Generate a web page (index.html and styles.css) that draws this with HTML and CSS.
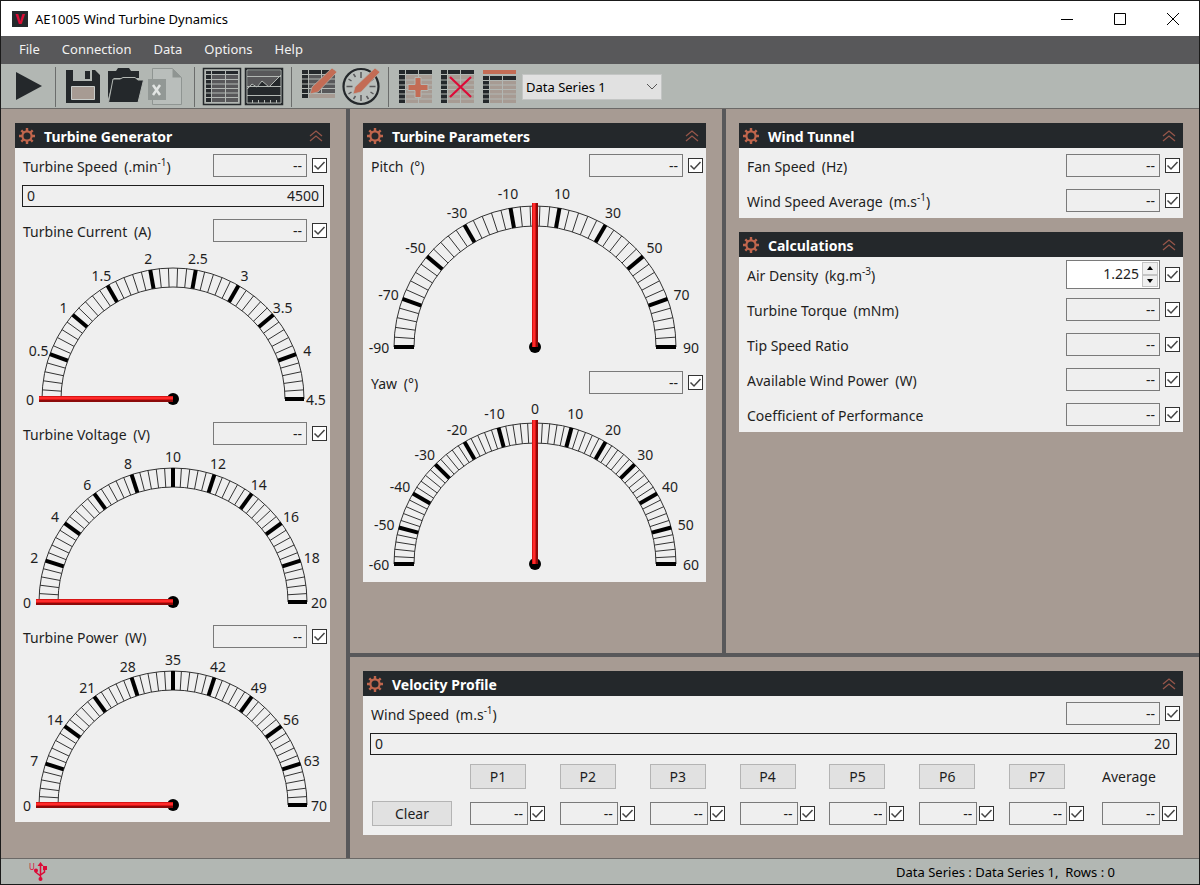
FILE: index.html
```html
<!DOCTYPE html>
<html lang="en">
<head>
  <meta charset="UTF-8" />
  <title>AE1005 Wind Turbine Dynamics</title>
  <link rel="stylesheet" href="styles.css">
</head>
<body>

  <!-- shared icons -->
  <svg class="sprite" aria-hidden="true">
    <symbol id="gear" viewBox="0 0 16 16">
      <circle cx="8" cy="8" r="4.6" fill="none" stroke="currentColor" stroke-width="2.2"/>
      <path d="M8 0v3M8 13v3M0 8h3M13 8h3M2.3 2.3l2.2 2.2M11.5 11.5l2.2 2.2M2.3 13.7l2.2-2.2M11.5 4.5l2.2-2.2" stroke="currentColor" stroke-width="2.4"/>
    </symbol>
    <symbol id="chevrons" viewBox="0 0 14 12">
      <path d="M1 6l6-5 6 5M1 11l6-5 6 5" fill="none" stroke="currentColor" stroke-width="1.3"/>
    </symbol>
  </svg>

  <header class="titlebar">
    <span class="logo">V</span>
    <h1>AE1005 Wind Turbine Dynamics</h1>
    <div class="window-buttons">
      <button aria-label="Minimize"><svg width="14" height="14"><path d="M1 7.5h12"/></svg></button>
      <button aria-label="Maximize"><svg width="14" height="14"><path d="M1.5 1.5h11v11h-11z"/></svg></button>
      <button aria-label="Close"><svg width="14" height="14"><path d="M1 1l12 12M13 1L1 13"/></svg></button>
    </div>
  </header>

  <nav class="menubar">
    <a href="#">File</a>
    <a href="#">Connection</a>
    <a href="#">Data</a>
    <a href="#">Options</a>
    <a href="#">Help</a>
  </nav>

  <div class="toolbar">
    <button aria-label="Run">
      <svg viewBox="0 0 42 42"><path d="M9 6l26 14L9 34z" fill="#24282b"/></svg>
    </button>
    <span class="sep"></span>
    <button aria-label="Save">
      <svg viewBox="0 0 42 42">
        <path d="M4 4h7v11h19V4h3l5 5v28H4z" fill="#24282b"/>
        <path d="M23 5h5v8h-5z" fill="#24282b"/>
        <path d="M9.5 20.5h23v13h-23z" fill="#a79b93" stroke="#c9cdca"/>
      </svg>
    </button>
    <button aria-label="Open">
      <svg viewBox="0 0 42 42">
        <path d="M4 33V5h8l2-3h11l2 3h8v7H10z" fill="#24282b"/>
        <path d="M4.5 36.5L9 13h7l3-1.500h12l3 2.5h5.5L34 36.5z" fill="#24282b" stroke="#b2b7b3"/>
      </svg>
    </button>
    <button aria-label="Export to Excel">
      <svg viewBox="0 0 42 42">
        <path d="M6.5 2.5h20l9 9v27h-29z" fill="#b9bebb" stroke="#8f9592"/>
        <path d="M26.5 2.5l9 9h-9z" fill="#8f9592"/>
        <path d="M2 13h18v21H2z" fill="#929895"/>
        <path d="M7 19l7 10M14 19L7 29" stroke="#e2e5e3" stroke-width="2.5"/>
      </svg>
    </button>
    <span class="sep"></span>
    <button aria-label="Data table">
      <svg viewBox="0 0 42 42">
        <path d="M2.5 2.5h37v36h-37z" fill="#b2b7b3" stroke="#24282b" stroke-width="1.5"/>
        <path d="M5 5h5v31H5zM11 5h13v3H11zM25 5h12v3H25z" fill="#24282b"/>
        <path d="M11 9h13v27H11zM25 9h12v27H25z" fill="#58585a"/>
        <path d="M5 8.5h33M5 13.5h33M5 18h33M5 22.5h33M5 27h33M5 31.500h33" stroke="#b2b7b3" stroke-width="1.2"/>
      </svg>
    </button>
    <button aria-label="Chart">
      <svg viewBox="0 0 42 42">
        <path d="M2.5 2.5h37v36h-37z" fill="#24282b" stroke="#24282b" stroke-width="1.5"/>
        <path d="M4 4h34v33H4z" fill="#24282b" stroke="#b2b7b3"/>
        <path d="M5 5h32v5L26 21l-7-6-5 5-4-2-5 5z" fill="#58585a"/>
        <path d="M4 10.5h34M4 20.5h34M4 29.5h34" stroke="#b2b7b3"/>
        <path d="M4 23l5-5 5 3 5-6 7 6 12-12" fill="none" stroke="#b2b7b3"/>
        <path d="M9.5 34v3M15.5 34v3M21.5 34v3M27.5 34v3M33.5 34v3" stroke="#b2b7b3"/>
      </svg>
    </button>
    <span class="sep"></span>
    <button aria-label="Edit data">
      <svg viewBox="0 0 42 42">
        <path d="M4 4h6v28H4zM11 4h12v4H11zM24 4h13v4H24z" fill="#24282b"/>
        <path d="M11 9h12v18H11zM24 9h13v18H24z" fill="#58585a"/>
        <path d="M11 28h26v4H11z" fill="#a79b93"/>
        <path d="M4 8.5h33M4 13h33M4 18h33M4 22.5h33M4 27.5h33" stroke="#b2b7b3"/>
        <path d="M12 28l2-7L34 2l5 4-19 20z" fill="#c36c55" stroke="#b2b7b3" stroke-width=".7"/>
      </svg>
    </button>
    <button aria-label="Timed capture">
      <svg viewBox="0 0 42 42">
        <circle cx="21" cy="20.5" r="17.5" fill="#b9bebb" stroke="#24282b" stroke-width="2.2"/>
        <path d="M21 6v6M21 29v6M6.5 20.5h6M29.5 20.5h6M13.5 8l2 3M28.5 33l-2-3M8.5 13l3 2M33.5 28l-3-2M8.5 28l3-2M13.5 33l2-3M33.5 13l-3 2" stroke="#58585a" stroke-width="1.5"/>
        <path d="M13 28l2-7L35 2l5 4-19 20z" fill="#c36c55" stroke="#b2b7b3" stroke-width=".7"/>
      </svg>
    </button>
    <span class="sep"></span>
    <button aria-label="Add series">
      <svg viewBox="0 0 42 42">
        <path d="M4 4h6v33H4zM11 4h12v4H11zM24 4h13v4H24z" fill="#24282b"/>
        <path d="M11 9h12v28H11zM24 9h13v28H24z" fill="#a79b93"/>
        <path d="M4 8.5h33M4 14h33M4 19h33M4 23.5h33M4 28h33M4 33h33" stroke="#b2b7b3"/>
        <path d="M20 11.5h6v7h7v6h-7v7h-6v-7h-7v-6h7z" fill="#c36c55" stroke="#b2b7b3"/>
      </svg>
    </button>
    <button aria-label="Delete series">
      <svg viewBox="0 0 42 42">
        <path d="M4 4h6v33H4zM11 4h12v4H11zM24 4h13v4H24z" fill="#24282b"/>
        <path d="M11 9h12v28H11zM24 9h13v28H24z" fill="#a79b93"/>
        <path d="M4 8.5h33M4 14h33M4 19h33M4 23.5h33M4 28h33M4 33h33" stroke="#b2b7b3"/>
        <path d="M13 11l21 20M34 11L13 31" stroke="#dc0a37" stroke-width="2.2"/>
      </svg>
    </button>
    <button aria-label="Rename series">
      <svg viewBox="0 0 42 42">
        <path d="M4 4h33v4H4z" fill="#c36c55"/>
        <path d="M4 10h6v27H4zM11 10h12v4H11zM24 10h13v4H24z" fill="#24282b"/>
        <path d="M11 15h12v22H11zM24 15h13v22H24z" fill="#a79b93"/>
        <path d="M4 14.5h33M4 19h33M4 23.5h33M4 28h33M4 33h33" stroke="#b2b7b3"/>
      </svg>
    </button>
    <select aria-label="Data series">
      <option>Data Series 1</option>
    </select>
  </div>

  <main class="workspace">
    <section class="pane generator">
      <article class="panel">
        <h2><svg class="gear"><use href="#gear"/></svg>Turbine Generator<button aria-label="Collapse"><svg><use href="#chevrons"/></svg></button></h2>
        <div class="row">
          <label for="speed">Turbine Speed <span>(.min<sup>-1</sup>)</span></label>
          <input id="speed" class="value" value="--" readonly>
          <input type="checkbox" aria-label="Record turbine speed" checked>
        </div>
        <div class="bar"><span>0</span><span>4500</span></div>
        <div class="row">
          <label for="current">Turbine Current <span>(A)</span></label>
          <input id="current" class="value" value="--" readonly>
          <input type="checkbox" aria-label="Record turbine current" checked>
        </div>
        <svg class="gauge" viewBox="0 0 315 168" data-min="0" data-max="4.5" data-step="0.5" data-value="0" data-radius="131" data-gap="12"></svg>
        <div class="row">
          <label for="voltage">Turbine Voltage <span>(V)</span></label>
          <input id="voltage" class="value" value="--" readonly>
          <input type="checkbox" aria-label="Record turbine voltage" checked>
        </div>
        <svg class="gauge" viewBox="0 0 315 168" data-min="0" data-max="20" data-step="2" data-value="0" data-radius="134" data-gap="12"></svg>
        <div class="row">
          <label for="power">Turbine Power <span>(W)</span></label>
          <input id="power" class="value" value="--" readonly>
          <input type="checkbox" aria-label="Record turbine power" checked>
        </div>
        <svg class="gauge" viewBox="0 0 315 168" data-min="0" data-max="70" data-step="7" data-value="0" data-radius="134" data-gap="12"></svg>
      </article>
    </section>

    <section class="pane parameters">
      <article class="panel">
        <h2><svg class="gear"><use href="#gear"/></svg>Turbine Parameters<button aria-label="Collapse"><svg><use href="#chevrons"/></svg></button></h2>
        <div class="row">
          <label for="pitch">Pitch <span>(°)</span></label>
          <input id="pitch" class="value" value="--" readonly>
          <input type="checkbox" aria-label="Record pitch" checked>
        </div>
        <svg class="gauge" viewBox="0 0 343 182" data-min="-90" data-max="90" data-step="20" data-value="0" data-radius="141" data-gap="15"></svg>
        <div class="row">
          <label for="yaw">Yaw <span>(°)</span></label>
          <input id="yaw" class="value" value="--" readonly>
          <input type="checkbox" aria-label="Record yaw" checked>
        </div>
        <svg class="gauge" viewBox="0 0 343 182" data-min="-60" data-max="60" data-step="10" data-value="0" data-radius="141" data-gap="15"></svg>
      </article>
    </section>

    <section class="pane tunnel">
      <article class="panel">
        <h2><svg class="gear"><use href="#gear"/></svg>Wind Tunnel<button aria-label="Collapse"><svg><use href="#chevrons"/></svg></button></h2>
        <div class="row">
          <label for="fan">Fan Speed <span>(Hz)</span></label>
          <input id="fan" class="value" value="--" readonly>
          <input type="checkbox" aria-label="Record fan speed" checked>
        </div>
        <div class="row">
          <label for="wind-average">Wind Speed Average <span>(m.s<sup>-1</sup>)</span></label>
          <input id="wind-average" class="value" value="--" readonly>
          <input type="checkbox" aria-label="Record wind speed average" checked>
        </div>
      </article>

      <article class="panel">
        <h2><svg class="gear"><use href="#gear"/></svg>Calculations<button aria-label="Collapse"><svg><use href="#chevrons"/></svg></button></h2>
        <div class="row">
          <label for="density">Air Density <span>(kg.m<sup>-3</sup>)</span></label>
          <div class="spinner">
            <input id="density" value="1.225">
            <div class="steps">
              <button aria-label="Increase"><svg viewBox="0 0 6 4"><path d="M0 4l3-4 3 4z"/></svg></button>
              <button aria-label="Decrease"><svg viewBox="0 0 6 4"><path d="M0 0l3 4 3-4z"/></svg></button>
            </div>
          </div>
          <input type="checkbox" aria-label="Record air density" checked>
        </div>
        <div class="row">
          <label for="torque">Turbine Torque <span>(mNm)</span></label>
          <input id="torque" class="value" value="--" readonly>
          <input type="checkbox" aria-label="Record turbine torque" checked>
        </div>
        <div class="row">
          <label for="tip">Tip Speed Ratio</label>
          <input id="tip" class="value" value="--" readonly>
          <input type="checkbox" aria-label="Record tip speed ratio" checked>
        </div>
        <div class="row">
          <label for="available">Available Wind Power <span>(W)</span></label>
          <input id="available" class="value" value="--" readonly>
          <input type="checkbox" aria-label="Record available wind power" checked>
        </div>
        <div class="row">
          <label for="coefficient">Coefficient of Performance</label>
          <input id="coefficient" class="value" value="--" readonly>
          <input type="checkbox" aria-label="Record coefficient of performance" checked>
        </div>
      </article>
    </section>

    <section class="pane velocity">
      <article class="panel">
        <h2><svg class="gear"><use href="#gear"/></svg>Velocity Profile<button aria-label="Collapse"><svg><use href="#chevrons"/></svg></button></h2>
        <div class="row">
          <label for="wind">Wind Speed <span>(m.s<sup>-1</sup>)</span></label>
          <input id="wind" class="value" value="--" readonly>
          <input type="checkbox" aria-label="Record wind speed" checked>
        </div>
        <div class="bar"><span>0</span><span>20</span></div>
        <div class="profile">
          <button class="btn clear">Clear</button>
          <div class="point">
            <button class="btn">P1</button>
            <input class="value" aria-label="P1" value="--" readonly>
            <input type="checkbox" aria-label="Record P1" checked>
          </div>
          <div class="point">
            <button class="btn">P2</button>
            <input class="value" aria-label="P2" value="--" readonly>
            <input type="checkbox" aria-label="Record P2" checked>
          </div>
          <div class="point">
            <button class="btn">P3</button>
            <input class="value" aria-label="P3" value="--" readonly>
            <input type="checkbox" aria-label="Record P3" checked>
          </div>
          <div class="point">
            <button class="btn">P4</button>
            <input class="value" aria-label="P4" value="--" readonly>
            <input type="checkbox" aria-label="Record P4" checked>
          </div>
          <div class="point">
            <button class="btn">P5</button>
            <input class="value" aria-label="P5" value="--" readonly>
            <input type="checkbox" aria-label="Record P5" checked>
          </div>
          <div class="point">
            <button class="btn">P6</button>
            <input class="value" aria-label="P6" value="--" readonly>
            <input type="checkbox" aria-label="Record P6" checked>
          </div>
          <div class="point">
            <button class="btn">P7</button>
            <input class="value" aria-label="P7" value="--" readonly>
            <input type="checkbox" aria-label="Record P7" checked>
          </div>
          <div class="point average">
            <label for="average">Average</label>
            <input id="average" class="value" value="--" readonly>
            <input type="checkbox" aria-label="Record average" checked>
          </div>
        </div>
      </article>
    </section>
  </main>

  <footer class="statusbar">
    <svg class="usb" viewBox="0 0 20 22" role="img" aria-label="USB disconnected">
      <text x="1" y="9">U</text>
      <path d="M12.5 4v14M7.5 8v3l5 4M16.5 7v4l-4 3" fill="none" stroke="#dc0a37" stroke-width="1.5"/>
      <path d="M12.5 1l3 4h-6zM15 5h4v4h-4z" fill="#dc0a37"/>
      <circle cx="8" cy="9.5" r="2" fill="#dc0a37"/>
      <circle cx="12.5" cy="18" r="2" fill="#dc0a37"/>
    </svg>
    <p>Data Series : Data Series 1,&nbsp; Rows : 0</p>
  </footer>

  <script>
    const SVG = "http://www.w3.org/2000/svg";

    function add(parent, name, attrs, text) {
      const el = document.createElementNS(SVG, name);
      for (const key in attrs) el.setAttribute(key, attrs[key]);
      if (text !== undefined) el.textContent = text;
      parent.appendChild(el);
      return el;
    }

    function drawGauge(svg) {
      const min = Number(svg.dataset.min);
      const max = Number(svg.dataset.max);
      const step = Number(svg.dataset.step);
      const value = Number(svg.dataset.value);
      const outer = Number(svg.dataset.radius);
      const labels = outer + Number(svg.dataset.gap);
      const box = svg.viewBox.baseVal;
      const inner = Math.round(outer * 0.856);
      const cx = Math.ceil(box.width / 2);
      const cy = Math.round(box.height * 0.9);

      // 0 = left end of the scale, 1 = right end
      const at = (t, r) => [cx - r * Math.cos(Math.PI * t), cy - r * Math.sin(Math.PI * t)];
      const arc = r => `M${at(0, r)}A${r} ${r} 0 0 1 ${at(1, r)}`;
      add(svg, "path", { class: "gauge-arc", d: arc(outer) + arc(inner) });

      const majors = Math.round((max - min) / step);
      for (let i = 0; i <= majors * 5; i++) {
        const t = i / (majors * 5);
        const major = i % 5 === 0;
        add(svg, "path", { class: major ? "gauge-major" : "gauge-minor", d: `M${at(t, inner)}L${at(t, outer)}` });
        if (major) {
          const [x, y] = at(t, labels);
          add(svg, "text", { x: x, y: y + 6 }, min + step * i / 5);
        }
      }

      add(svg, "circle", { cx: cx, cy: cy, r: 6 });
      const t = (value - min) / (max - min);
      const side = t < 0.5 ? 1 : -1;
      const needle = add(svg, "g", { transform: `translate(${cx} ${cy}) rotate(${180 * t}) scale(1 ${side})` });
      const length = outer + 3;
      add(needle, "path", { fill: "#8c0a0a", d: `M${-length} -3H0v6H${-length}z` });
      add(needle, "path", { fill: "#d81414", d: `M${-length} -3H0v4H${-length}z` });
      add(needle, "path", { fill: "#ff2b2b", d: `M${-length} -2H0v2H${-length}z` });
    }

    document.querySelectorAll(".gauge").forEach(drawGauge);
  </script>

</body>
</html>
```
FILE: styles.css
```css
* {
  box-sizing: border-box;
}

body {
  margin: 0;
  min-height: 100vh;
  display: flex;
  flex-direction: column;
  border: 1px solid #1a1a1a;
  background-color: #a79b93;
  font-family: "Noto Sans", "Open Sans", sans-serif;
  font-size: 14px;
  color: #1e1e1e;
}

button, input, select {
  font: inherit;
  color: inherit;
}

button {
  padding: 0;
  border: none;
  background: none;
}

.sprite {
  display: none;
}

/* window chrome */
.titlebar {
  display: flex;
  align-items: center;
  height: 35px;
  padding-left: 11px;
  background-color: #fff;
}

.logo {
  width: 16px;
  height: 16px;
  background-color: #24282b;
  color: #dc0a37;
  font-size: 14px;
  font-weight: 800;
  line-height: 16px;
  text-align: center;
}

.titlebar h1 {
  margin: 0 auto 0 7px;
  font-size: 13px;
  font-weight: 400;
  color: #000;
}

.window-buttons {
  display: flex;
}

.window-buttons button {
  width: 53px;
  height: 34px;
}

.window-buttons svg {
  display: block;
  margin: auto;
  fill: none;
  stroke: #000;
}

.menubar {
  display: flex;
  gap: 22px;
  height: 28px;
  padding-left: 18px;
  background-color: #58585a;
  font-size: 13px;
  line-height: 27px;
}

.menubar a {
  color: #f2f2f2;
  text-decoration: none;
}

.toolbar {
  display: flex;
  align-items: center;
  height: 45px;
  padding: 2px 0 0 6px;
  background-color: #b2b7b3;
  border-bottom: 1px solid #6b6967;
}

.toolbar button {
  width: 42px;
  height: 42px;
}

.toolbar svg {
  display: block;
}

.sep {
  width: 1px;
  height: 40px;
  margin: 0 6px;
  background-color: #6b6d6c;
}

.toolbar select {
  width: 140px;
  height: 26px;
  margin-left: 1px;
  padding: 0 3px;
  appearance: none;
  border: 1px solid #c3c5c4;
  border-radius: 0;
  background: #e1e1e1 url("data:image/svg+xml,%3Csvg xmlns='http://www.w3.org/2000/svg' width='10' height='6'%3E%3Cpath d='M0 0l5 5 5-5' fill='none' stroke='%23555'/%3E%3C/svg%3E") no-repeat right 4px center;
  font-size: 13px;
  color: #000;
}

/* workspace */
.workspace {
  flex: 1;
  display: grid;
  grid-template-columns: 345fr 376fr 477fr;
  grid-template-rows: 1fr auto;
}

.pane {
  padding: 14px 16px 14px 13px;
  border-left: 4px solid #58585a;
}

.generator {
  grid-row: span 2;
  padding-left: 14px;
  border-left: none;
}

.velocity {
  grid-column: 2 / 4;
  padding-bottom: 23px;
  border-top: 4px solid #58585a;
}

.panel {
  background-color: #efefef;
}

.panel + .panel {
  margin-top: 14px;
}

.panel h2 {
  display: flex;
  align-items: center;
  height: 25px;
  margin: 0;
  padding: 1px 7px 0 4px;
  background-color: #24282b;
  color: #fff;
  font-size: 14px;
  font-weight: 700;
}

.panel h2 .gear {
  width: 16px;
  height: 16px;
  margin-right: 9px;
  color: #c0664d;
}

.panel h2 button {
  margin-left: auto;
  color: #96564a;
}

.panel h2 button svg {
  display: block;
  width: 14px;
  height: 12px;
}

.row {
  display: flex;
  align-items: center;
  height: 35px;
  padding: 0 3px 0 8px;
}

.row label {
  margin-right: auto;
  padding-top: 1px;
}

.row label span {
  margin-left: 3px;
}

sup {
  font-size: 10px;
  line-height: 0;
}

.value {
  width: 94px;
  height: 23px;
  padding: 0 4px;
  border: 1px solid #7a7a7a;
  background-color: #efefef;
  text-align: right;
}

input[type="checkbox"] {
  width: 15px;
  height: 15px;
  margin: 0 0 0 5px;
  appearance: none;
  border: 1px solid #333;
  background-color: #fff;
}

input[type="checkbox"]:checked {
  background-image: url("data:image/svg+xml,%3Csvg xmlns='http://www.w3.org/2000/svg' width='13' height='13'%3E%3Cpath d='M1.5 6.5l3.5 3.5 6.5-7' fill='none' stroke='%23444' stroke-width='1.5'/%3E%3C/svg%3E");
}

.spinner {
  display: flex;
  width: 94px;
  height: 29px;
  padding: 1px;
  border: 1px solid #7a7a7a;
  background-color: #fff;
}

.spinner input {
  flex: 1;
  min-width: 0;
  padding: 0 3px 3px;
  border: none;
  text-align: right;
}

.steps {
  display: flex;
  flex-direction: column;
  width: 16px;
}

.steps button {
  flex: 1;
  border: 1px solid #c4c4c4;
  background-color: #efefef;
}

.steps svg {
  display: block;
  width: 6px;
  height: 4px;
  margin: auto;
}

.bar {
  display: flex;
  justify-content: space-between;
  height: 22px;
  margin: 2px 6px 6px 7px;
  padding: 0 4px;
  border: 1px solid #1e1e1e;
  line-height: 20px;
}

/* gauges */
.gauge {
  display: block;
  width: 100%;
  overflow: visible;
}

.gauge text {
  text-anchor: middle;
  fill: #1e1e1e;
}

.gauge-arc {
  fill: none;
  stroke: #333;
}

.gauge-minor {
  stroke: #333;
}

.gauge-major {
  stroke: #000;
  stroke-width: 4px;
}

/* velocity profile */
.velocity .bar {
  padding-right: 6px;
}

.profile {
  display: grid;
  grid-template-columns: 98px repeat(7, 1fr) 78px;
  padding: 3px 6px 9px 9px;
}

.point {
  display: grid;
  grid-template-columns: 58px 15px;
  grid-template-rows: 25px 25px;
  align-items: center;
  gap: 12px 2px;
}

.point .value {
  width: 58px;
}

.point input[type="checkbox"] {
  margin: 0;
}

.point .btn,
.point label {
  grid-column: 1 / 3;
}

.average {
  justify-content: end;
}

.btn {
  width: 56px;
  height: 25px;
  border: 1px solid #b4b4b4;
  background-color: #e1e1e1;
}

.clear {
  width: 80px;
  align-self: end;
}

.statusbar {
  display: flex;
  align-items: center;
  justify-content: space-between;
  height: 26px;
  padding: 0 84px 0 27px;
  border-top: 1px solid #6b6967;
  background-color: #b2b7b3;
  font-size: 13px;
  color: #000;
}

.statusbar p {
  margin: 0;
}

.usb {
  width: 20px;
  height: 22px;
  overflow: visible;
}

.usb text {
  font-size: 8px;
  fill: #dc0a37;
}
```
